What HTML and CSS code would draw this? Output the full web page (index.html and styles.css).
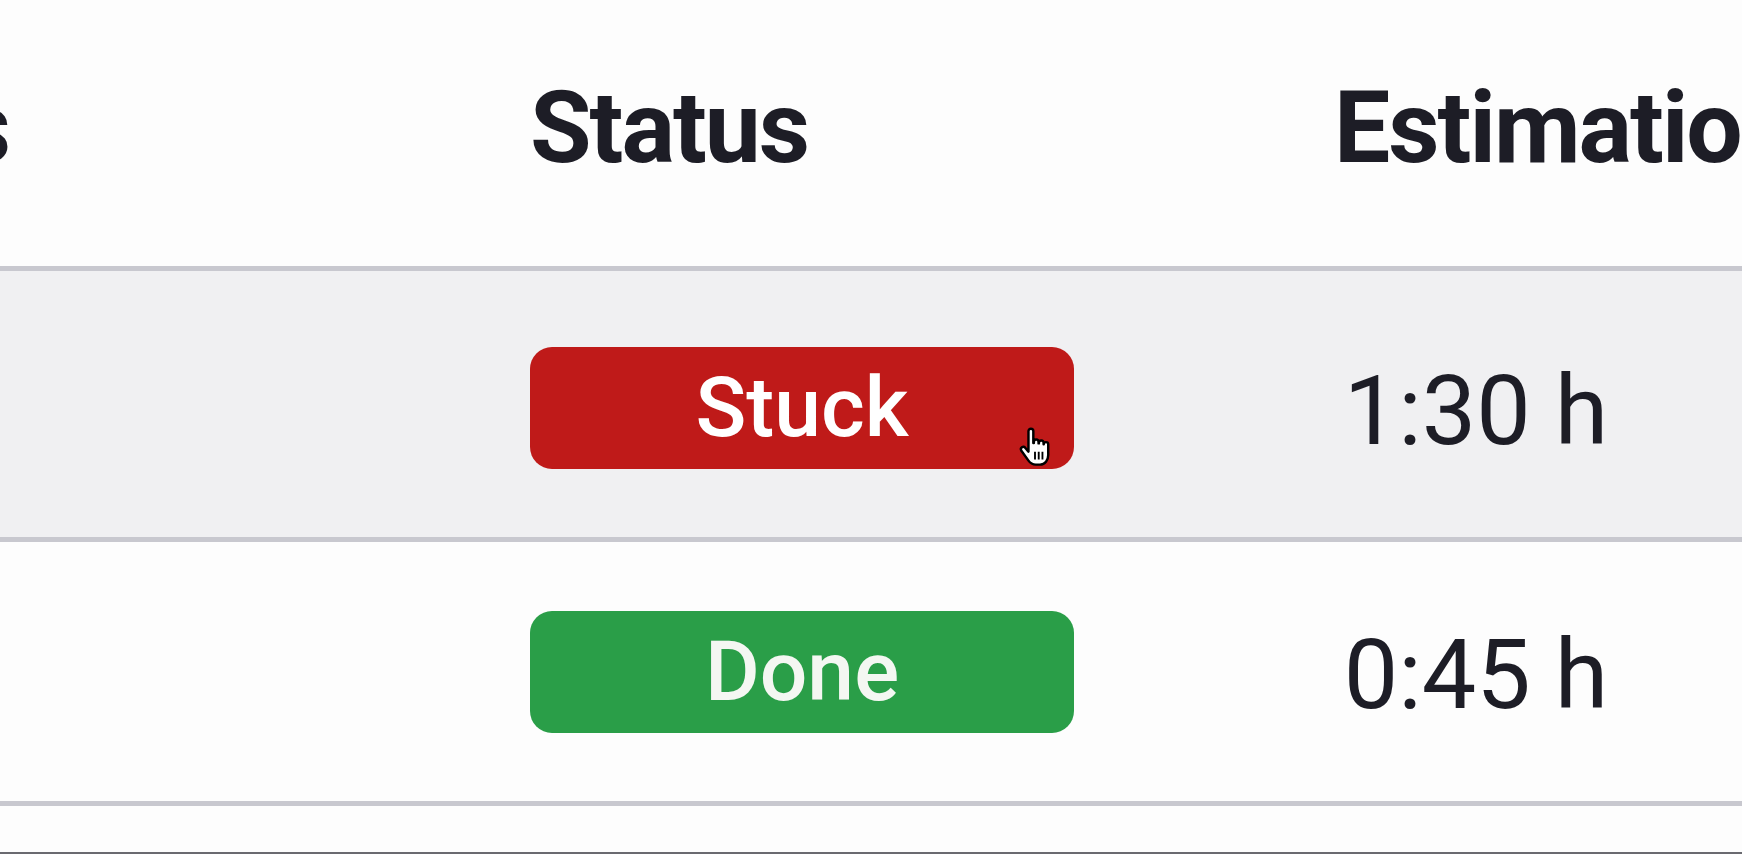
FILE: index.html
```html
<!DOCTYPE html>
<html lang="en">
<head>
<meta charset="utf-8">
<title>Board</title>
<link rel="stylesheet" href="styles.css">
</head>
<body>
<div class="viewport">
  <div class="table">
    <div class="row row--head">
      <div class="cell cell--owner"><span class="head-text">Owners</span></div>
      <div class="cell cell--status"><span class="head-text">Status</span></div>
      <div class="cell cell--est"><span class="head-text">Estimation</span></div>
    </div>
    <div class="row row--item row--hover">
      <div class="cell cell--owner"></div>
      <div class="cell cell--status">
        <button class="pill pill--stuck">Stuck
          <svg class="cursor" viewBox="0 0 18 22" width="34" height="41" aria-hidden="true">
            <path d="M5.5 2.2a1.3 1.3 0 0 1 2.6 0V8.6h.3V8a1.25 1.25 0 0 1 2.5 0v.8h.2v-.3a1.25 1.25 0 0 1 2.5 0v.8h.1a1.2 1.2 0 0 1 2.4 0V15c0 2.8-1.7 5.2-4.4 5.2H9.4c-1.9 0-3-.9-4-2.3L1.6 12.6a1.3 1.3 0 0 1 2.1-1.5l1.8 2.1Z" fill="#fff" stroke="#000" stroke-width="1.3" stroke-linejoin="round"/>
            <path d="M9 13.3v4.2M11 13.3v4.2M13 13.3v4.2" stroke="#000" stroke-width="1"/>
          </svg>
        </button>
      </div>
      <div class="cell cell--est"><span class="value">1:30 h</span></div>
    </div>
    <div class="row row--item">
      <div class="cell cell--owner"></div>
      <div class="cell cell--status">
        <button class="pill pill--done">Done</button>
      </div>
      <div class="cell cell--est"><span class="value">0:45 h</span></div>
    </div>
    <div class="row row--tail"></div>
  </div>
</div>
</body>
</html>
```
FILE: styles.css
```css
html, body {
  margin: 0;
  padding: 0;
}

body {
  background: #fdfdfd;
  font-family: Roboto, "Liberation Sans", Arial, sans-serif;
  color: #1d1d26;
  overflow: hidden;
  width: 1742px;
  height: 854px;
}

.viewport {
  width: 1742px;
  height: 854px;
  overflow: hidden;
}

.table {
  display: flex;
  flex-direction: column;
  width: 1742px;
}

.row {
  display: flex;
  align-items: center;
  box-sizing: border-box;
  white-space: nowrap;
}

.row--head {
  height: 271px;
  align-items: flex-start;
  padding-top: 78px;
  border-bottom: 5px solid #c8c8cf;
}

.row--item {
  height: 264px;
  border-bottom: 5px solid #c8c8cf;
}

.row--hover {
  height: 271px;
  padding-top: 8px;
  background: #f0f0f2;
}

.row--tail {
  height: 48px;
  border-bottom: 2px solid #6a6a70;
}

.cell {
  display: flex;
  box-sizing: border-box;
  flex: none;
}

.cell--owner {
  width: 530px;
  justify-content: flex-end;
  padding-right: 521px;
}

.cell--status {
  width: 801px;
}

.cell--est {
  width: 290px;
  justify-content: center;
}

.row--head .cell--est {
  justify-content: flex-start;
  padding-left: 3px;
}

.head-text {
  font-size: 100px;
  line-height: 100px;
  font-weight: 700;
  letter-spacing: -2px;
  color: #1d1d26;
}

.value {
  font-size: 97px;
  line-height: 97px;
  font-weight: 400;
  color: #1d1d26;
  padding-top: 7px;
}

.pill {
  position: relative;
  width: 544px;
  height: 122px;
  border: 0;
  border-radius: 22px;
  padding: 0;
  display: flex;
  align-items: center;
  justify-content: center;
  font-family: Roboto, "Liberation Sans", Arial, sans-serif;
  font-size: 84px;
  line-height: 84px;
  font-weight: 500;
  color: #ffffff;
  cursor: pointer;
}

.pill--stuck {
  background: #bf1a19;
}

.pill--done {
  background: #2a9e48;
  color: #f4f7f2;
}

.cursor {
  position: absolute;
  left: 488px;
  top: 80px;
}
```
